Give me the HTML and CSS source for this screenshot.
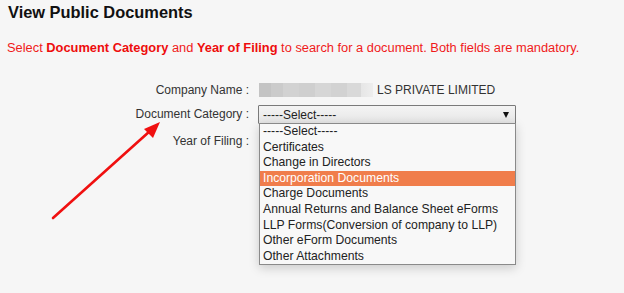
FILE: index.html
```html
<!DOCTYPE html>
<html>
<head>
<meta charset="utf-8">
<link rel="stylesheet" href="styles.css">
</head>
<body>
<div class="page">
  <h1 class="title">View Public Documents</h1>
  <p class="note">Select <b>Document Category</b> and <b>Year of Filing</b> to search for a document. Both fields are mandatory.</p>
  <div class="form">
    <div class="label row1">Company Name :</div>
    <div class="value row1"><span class="blur"></span><span class="cname">LS PRIVATE LIMITED</span></div>
    <div class="label row2">Document Category :</div>
    <div class="value row2">
      <div class="select-wrap">
        <div class="select"><span>-----Select-----</span><span class="caret"></span></div>
        <ul class="options">
          <li>-----Select-----</li>
          <li>Certificates</li>
          <li>Change in Directors</li>
          <li class="active">Incorporation Documents</li>
          <li>Charge Documents</li>
          <li>Annual Returns and Balance Sheet eForms</li>
          <li>LLP Forms(Conversion of company to LLP)</li>
          <li>Other eForm Documents</li>
          <li>Other Attachments</li>
        </ul>
      </div>
    </div>
    <div class="label row3">Year of Filing :</div>
    <div class="value row3"></div>
  </div>
  <svg class="arrow" width="624" height="293" viewBox="0 0 624 293">
    <line x1="53" y1="218" x2="150" y2="131" stroke="#f01010" stroke-width="2.6" stroke-linecap="round"/>
    <polygon points="160,122 144,129 153,138" fill="#f01010"/>
  </svg>
</div>
</body>
</html>
```
FILE: styles.css
```css
html, body {
  margin: 0;
  padding: 0;
  background: #f6f6f6;
}
.page {
  position: relative;
  width: 624px;
  height: 293px;
  overflow: hidden;
  font-family: "Liberation Sans", Arial, sans-serif;
}
.title {
  margin: 0;
  padding: 3px 0 0 8px;
  font-size: 16.4px;
  line-height: 19px;
  font-weight: bold;
  color: #111;
}
.note {
  margin: 18px 0 0 7px;
  font-size: 12.85px;
  line-height: 16px;
  color: #f01a1a;
}
.note b {
  color: #ee0d0d;
}
.form {
  display: grid;
  grid-template-columns: 249px 1fr;
  column-gap: 10px;
  margin-top: 26px;
  font-size: 12px;
  color: #333;
}
.label {
  text-align: right;
  line-height: 16px;
}
.row1 { height: 24px; }
.row2 { height: 27px; }
.value {
  line-height: 16px;
  color: #333;
}
.blur {
  display: inline-block;
  vertical-align: top;
  margin-top: 1px;
  margin-right: 4px;
  width: 114px;
  height: 14px;
  background: linear-gradient(90deg,
    #c4c4c4 0, #c4c4c4 12px,
    #cbcbcb 12px, #cbcbcb 24px,
    #d2d2d2 24px, #d2d2d2 40px,
    #cfcfcf 40px, #cfcfcf 56px,
    #d6d6d6 56px, #d6d6d6 72px,
    #d2d2d2 72px, #d2d2d2 88px,
    #d9d9d9 88px, #d9d9d9 102px,
    #e6e6e6 102px, #eeeeee 114px);
}
.cname {
  vertical-align: top;
}
.select-wrap {
  position: relative;
  margin: -1px 0 0 -1px;
  width: 258px;
}
.select {
  box-sizing: border-box;
  height: 19px;
  border: 1px solid #7a7a7a;
  border-radius: 1px;
  background: linear-gradient(#f4f4f4, #e6e6e6);
  display: flex;
  align-items: center;
  justify-content: space-between;
  padding: 0 6px 0 4px;
  color: #222;
  line-height: 16px;
}
.caret {
  width: 0;
  height: 0;
  border-left: 3.5px solid transparent;
  border-right: 3.5px solid transparent;
  border-top: 6px solid #111;
}
.options {
  position: absolute;
  left: 1px;
  top: 18px;
  width: 257px;
  box-sizing: border-box;
  margin: 0;
  padding: 0;
  list-style: none;
  background: #f8f8f8;
  border: 1px solid #8a8a8a;
  box-shadow: 0 3px 10px rgba(0, 0, 0, 0.18);
  z-index: 2;
  font-size: 12.2px;
}
.options li {
  height: 15.6px;
  line-height: 15.6px;
  padding-left: 3px;
  color: #222;
  white-space: nowrap;
}
.options li.active {
  background: #f07d4b;
  color: #fff;
}
.arrow {
  position: absolute;
  left: 0;
  top: 0;
  pointer-events: none;
  z-index: 3;
}
```
